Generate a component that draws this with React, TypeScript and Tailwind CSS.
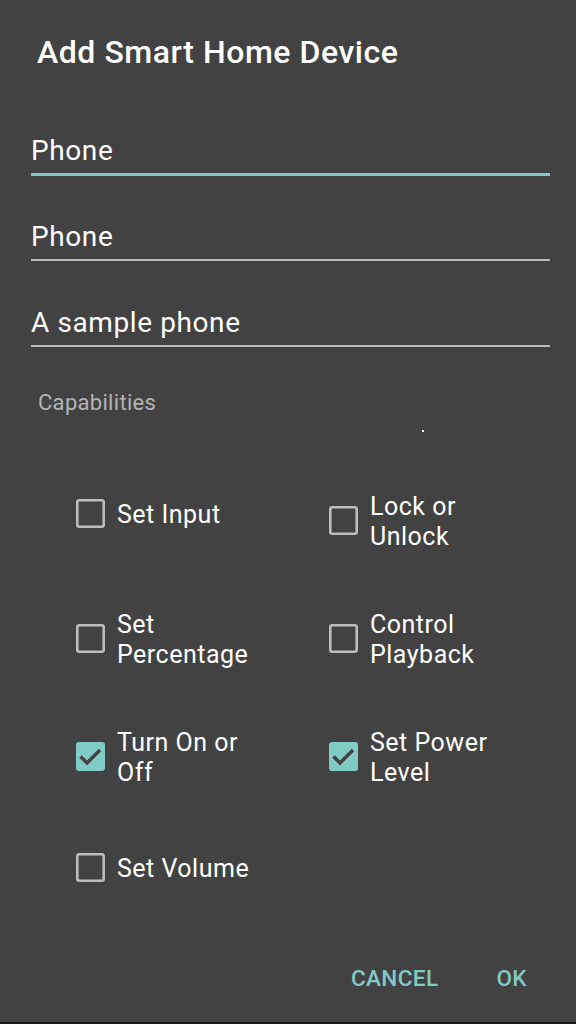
import React from "react";

const TEAL = "#80cbc4";

function Box({ checked }: { checked: boolean }) {
  return (
    <svg width="29" height="29" viewBox="0 0 29 29" className="shrink-0 -mt-[3px]">
      {checked ? (
        <>
          <rect x="0" y="0" width="29" height="29" rx="3" fill={TEAL} />
          <path d="M4.5 14.5l6.5 6.5 13-13" fill="none" stroke="#424242" strokeWidth="3.4" />
        </>
      ) : (
        <rect x="1.3" y="1.3" width="26.4" height="26.4" rx="2" fill="none" stroke="#bdbdbd" strokeWidth="2.6" />
      )}
    </svg>
  );
}

function Option({ lines, checked }: { lines: string[]; checked?: boolean }) {
  return (
    <div className="flex items-center gap-[12px] min-h-[72px] py-[13px]">
      <Box checked={!!checked} />
      <div className="text-[25px] leading-[30px] tracking-[0.5px] text-white">
        {lines.map((l) => (
          <div key={l}>{l}</div>
        ))}
      </div>
    </div>
  );
}

export default function App() {
  return (
    <div
      className="w-[576px] h-[1024px] bg-[#424242] flex flex-col overflow-hidden"
      style={{ fontFamily: "Roboto, 'Liberation Sans', sans-serif" }}
    >
      <h1 className="pt-[34px] pl-[37px] text-[32px] leading-[36px] tracking-[0.55px] font-medium text-white">
        Add Smart Home Device
      </h1>

      <div className="mt-[65px] ml-[31px] mr-[26px] border-b-[3px] border-[#80cbc4] pb-[6px]">
        <div className="text-[28px] leading-[32px] tracking-[0.6px] text-white">Phone</div>
      </div>
      <div className="mt-[45px] ml-[31px] mr-[26px] border-b-2 border-[#bdbdbd] pb-[6px]">
        <div className="text-[28px] leading-[32px] tracking-[0.6px] text-white">Phone</div>
      </div>
      <div className="mt-[46px] ml-[31px] mr-[26px] border-b-2 border-[#bdbdbd] pb-[6px]">
        <div className="text-[28px] leading-[32px] tracking-[0.6px] text-white">A sample phone</div>
      </div>

      <div className="mt-[43px] pl-[38px] text-[22px] leading-[26px] tracking-[0.3px] text-[#b4b4b4]">
        Capabilities
      </div>
      <div className="mt-[14px] ml-[422px] w-[2px] h-[2px] bg-white" />

      <div className="mt-[47px] pl-[76px] grid grid-cols-[253px_1fr] gap-y-[32px] items-start">
        <Option lines={["Set Input"]} />
        <Option lines={["Lock or", "Unlock"]} />
        <Option lines={["Set", "Percentage"]} />
        <Option lines={["Control", "Playback"]} />
        <Option lines={["Turn On or", "Off"]} checked />
        <Option lines={["Set Power", "Level"]} checked />
        <Option lines={["Set Volume"]} />
      </div>

      <div className="mt-auto flex justify-end gap-[58px] pr-[49px] pb-[31px] text-[22.5px] leading-[26px] tracking-[0.4px] font-medium text-[#80cbc4]">
        <span>CANCEL</span>
        <span>OK</span>
      </div>
      <div className="h-[2px] bg-[#1a1a1a]" />
    </div>
  );
}
